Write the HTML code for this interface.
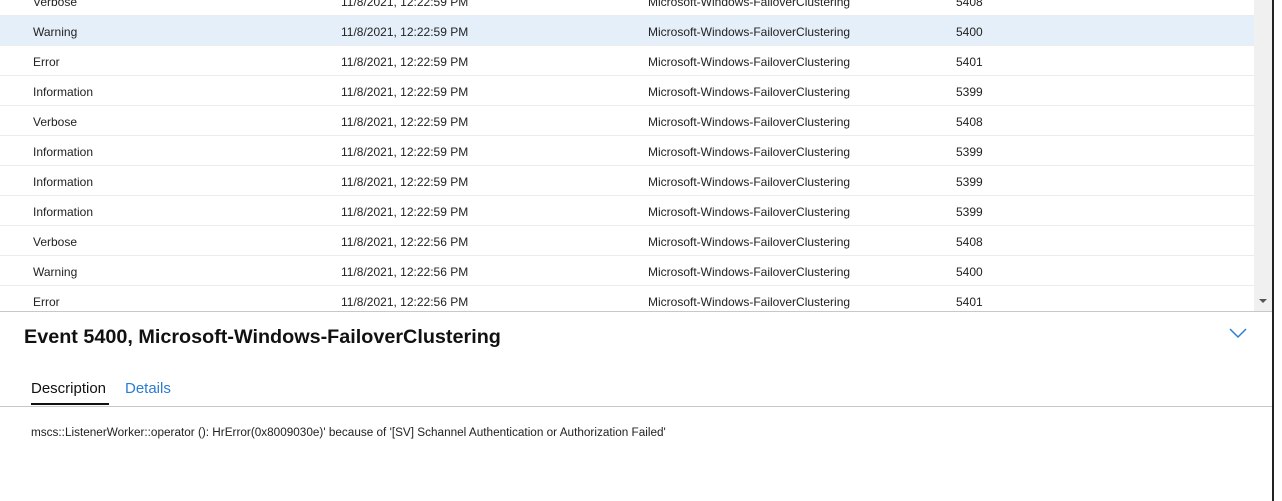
<!DOCTYPE html>
<html><head><style>
body{margin:0;width:1282px;height:501px;background:#fff;font-family:"Liberation Sans",sans-serif;overflow:hidden;position:relative;color:#222}
.tbl{position:absolute;left:0;top:0;width:1254px;height:311px;overflow:hidden}
.row{position:absolute;left:0;width:1254px;height:29px;border-bottom:1px solid #ececec;font-size:12px;line-height:33px}
.row span{position:absolute;top:0}
.sb{position:absolute;left:1254px;top:0;width:18px;height:311px;background:#f0f0f0}
.rb{position:absolute;left:1272px;top:0;width:2px;height:501px;background:#222}
</style></head><body>
<div class="tbl">
<div class="row" style="top:-14px"><span style="left:33px">Verbose</span><span style="left:341px">11/8/2021, 12:22:59 PM</span><span style="left:648px">Microsoft-Windows-FailoverClustering</span><span style="left:956px">5408</span></div>
<div class="row" style="top:16px;background:#e5eff9"><span style="left:33px">Warning</span><span style="left:341px">11/8/2021, 12:22:59 PM</span><span style="left:648px">Microsoft-Windows-FailoverClustering</span><span style="left:956px">5400</span></div>
<div class="row" style="top:46px"><span style="left:33px">Error</span><span style="left:341px">11/8/2021, 12:22:59 PM</span><span style="left:648px">Microsoft-Windows-FailoverClustering</span><span style="left:956px">5401</span></div>
<div class="row" style="top:76px"><span style="left:33px">Information</span><span style="left:341px">11/8/2021, 12:22:59 PM</span><span style="left:648px">Microsoft-Windows-FailoverClustering</span><span style="left:956px">5399</span></div>
<div class="row" style="top:106px"><span style="left:33px">Verbose</span><span style="left:341px">11/8/2021, 12:22:59 PM</span><span style="left:648px">Microsoft-Windows-FailoverClustering</span><span style="left:956px">5408</span></div>
<div class="row" style="top:136px"><span style="left:33px">Information</span><span style="left:341px">11/8/2021, 12:22:59 PM</span><span style="left:648px">Microsoft-Windows-FailoverClustering</span><span style="left:956px">5399</span></div>
<div class="row" style="top:166px"><span style="left:33px">Information</span><span style="left:341px">11/8/2021, 12:22:59 PM</span><span style="left:648px">Microsoft-Windows-FailoverClustering</span><span style="left:956px">5399</span></div>
<div class="row" style="top:196px"><span style="left:33px">Information</span><span style="left:341px">11/8/2021, 12:22:59 PM</span><span style="left:648px">Microsoft-Windows-FailoverClustering</span><span style="left:956px">5399</span></div>
<div class="row" style="top:226px"><span style="left:33px">Verbose</span><span style="left:341px">11/8/2021, 12:22:56 PM</span><span style="left:648px">Microsoft-Windows-FailoverClustering</span><span style="left:956px">5408</span></div>
<div class="row" style="top:256px"><span style="left:33px">Warning</span><span style="left:341px">11/8/2021, 12:22:56 PM</span><span style="left:648px">Microsoft-Windows-FailoverClustering</span><span style="left:956px">5400</span></div>
<div class="row" style="top:286px"><span style="left:33px">Error</span><span style="left:341px">11/8/2021, 12:22:56 PM</span><span style="left:648px">Microsoft-Windows-FailoverClustering</span><span style="left:956px">5401</span></div>
</div>
<div class="sb"><div style="position:absolute;left:5px;top:299px;width:0;height:0;border-left:4px solid transparent;border-right:4px solid transparent;border-top:4px solid #555"></div></div>
<div style="position:absolute;left:0;top:311px;width:1272px;height:1px;background:#c8c8c8"></div>
<div class="rb"></div>
<div style="position:absolute;left:24px;top:326px;font-size:19.8px;font-weight:bold;color:#111">Event 5400, Microsoft-Windows-FailoverClustering</div>
<svg style="position:absolute;left:1229px;top:327px" width="18" height="12"><path d="M1 2 L9 10 L17 2" stroke="#2b7cd3" stroke-width="1.5" fill="none"/></svg>
<div style="position:absolute;left:31px;top:380px;font-size:15px;color:#111">Description</div>
<div style="position:absolute;left:125px;top:380px;font-size:15px;color:#2b7cd3">Details</div>
<div style="position:absolute;left:31px;top:403px;width:78px;height:2px;background:#111"></div>
<div style="position:absolute;left:0;top:406px;width:1272px;height:1px;background:#c8c8c8"></div>
<div style="position:absolute;left:31px;top:426px;font-size:11.75px;color:#222">mscs::ListenerWorker::operator (): HrError(0x8009030e)' because of '[SV] Schannel Authentication or Authorization Failed'</div>
</body></html>
